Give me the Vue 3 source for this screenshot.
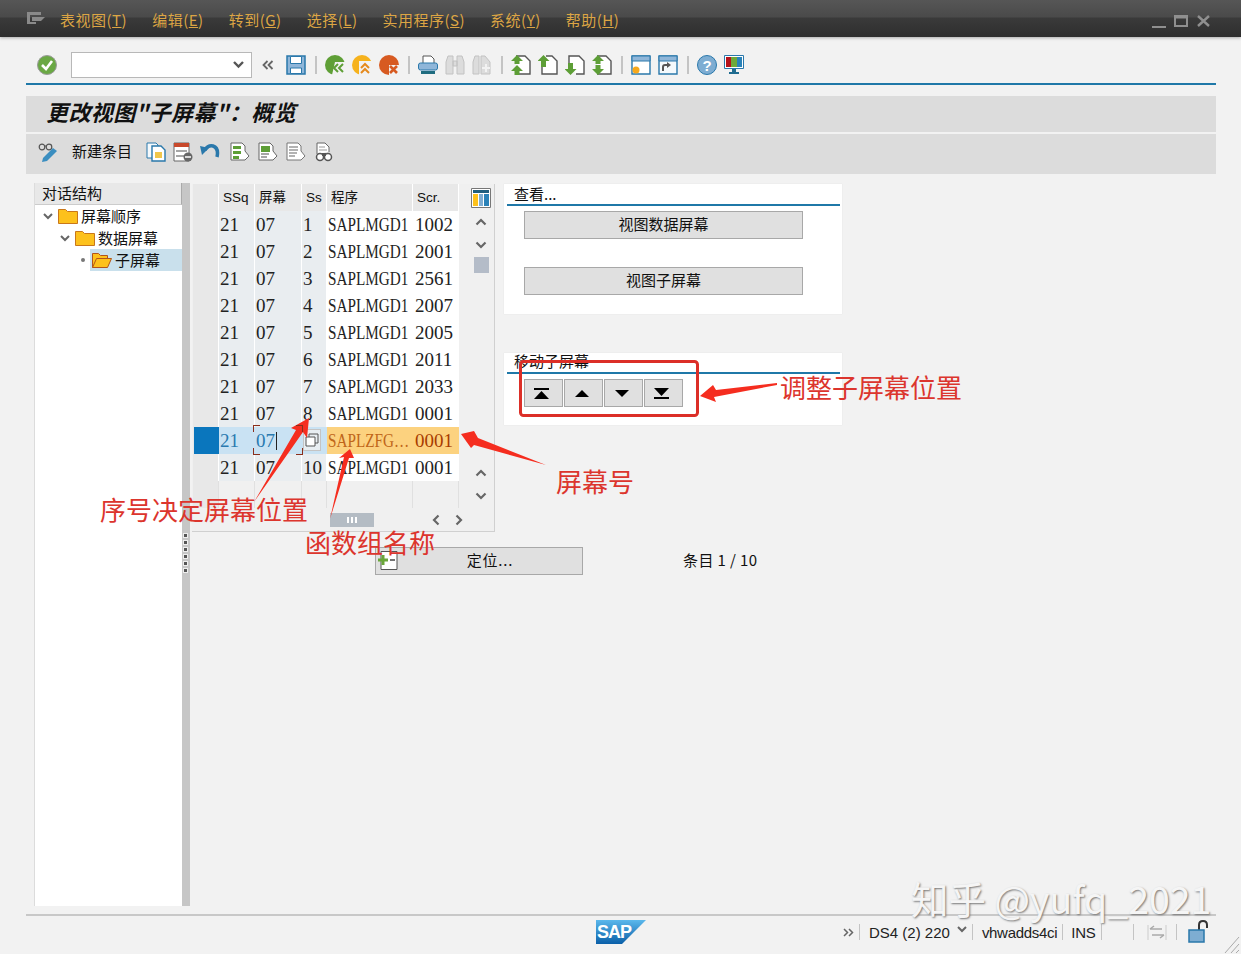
<script setup>
const menus = [
  { label: '表视图', key: 'T' },
  { label: '编辑', key: 'E' },
  { label: '转到', key: 'G' },
  { label: '选择', key: 'L' },
  { label: '实用程序', key: 'S' },
  { label: '系统', key: 'Y' },
  { label: '帮助', key: 'H' }
];

const columns = ['SSq', '屏幕', 'Ss', '程序', 'Scr.'];

const rows = [
  { ss: '1', scr: '1002' },
  { ss: '2', scr: '2001' },
  { ss: '3', scr: '2561' },
  { ss: '4', scr: '2007' },
  { ss: '5', scr: '2005' },
  { ss: '6', scr: '2011' },
  { ss: '7', scr: '2033' },
  { ss: '8', scr: '0001' },
  { ss: '', scr: '0001', prog: 'SAPLZFG…', active: true },
  { ss: '10', scr: '0001' }
];
</script>

<template>
  <div class="page">
    <header class="titlebar">
      <svg class="sys-icon" width="19" height="14" viewBox="0 0 19 14">
        <path d="M1 1h14v3H4v7h6v2H1z" fill="#8a8a8a" />
        <path d="M6 6h13l-4 4H6z" fill="#8a8a8a" />
      </svg>
      <nav class="menu">
        <span v-for="m in menus" :key="m.key">{{ m.label }}(<u>{{ m.key }}</u>)</span>
      </nav>
      <div class="win-btns">
        <svg width="62" height="16" viewBox="0 0 62 16">
          <path d="M2 14h14" stroke="#8f8f8f" stroke-width="2" />
          <path d="M25 3h12v10H25z" fill="none" stroke="#8f8f8f" stroke-width="2" />
          <path d="M25 4h12" stroke="#8f8f8f" stroke-width="3" />
          <path d="M48 3l11 10M59 3L48 13" stroke="#8f8f8f" stroke-width="2.4" />
        </svg>
      </div>
    </header>

    <div class="toolbar">
      <svg class="ic" viewBox="0 0 20 20">
        <circle cx="10" cy="10" r="9.5" fill="#6aa844" stroke="#9a9a9a" />
        <path d="M5 10l4 4 6-8" fill="none" stroke="#fff" stroke-width="2.6" />
      </svg>
      <div class="combo">
        <svg width="11" height="8" viewBox="0 0 11 8"><path d="M1 1l4.5 4.5L10 1" fill="none" stroke="#555" stroke-width="2.4" /></svg>
      </div>
      <svg class="chev-left" width="12" height="10" viewBox="0 0 12 10">
        <path d="M5.500 1L1.500 5l4 4M10.500 1l-4 4 4 4" fill="none" stroke="#666" stroke-width="1.800" />
      </svg>
      <svg class="ic" viewBox="0 0 20 20">
        <path d="M1 1h18v18H1z" fill="#8fb6d9" stroke="#2a78ab" stroke-width="1.500" />
        <path d="M4.500 1.500h11v7h-11zM4.500 13h11v5.500h-11z" fill="#fff" stroke="#2a78ab" />
      </svg>
      <i class="sep"></i>
      <svg class="ic" viewBox="0 0 20 20">
        <circle cx="10" cy="10" r="10" fill="#5f9f36" />
        <path d="M10 7h10v13H7z" fill="#f2f2f2" />
        <path d="M13 9l-4 4 4 4M18 9l-4 4 4 4" fill="none" stroke="#5f9f36" stroke-width="2" />
      </svg>
      <svg class="ic" viewBox="0 0 20 20">
        <circle cx="10" cy="10" r="10" fill="#f6b21d" />
        <path d="M7 6h13v14H7z" fill="#f2f2f2" />
        <path d="M9 13l4-4 4 4M9 18l4-4 4 4" fill="none" stroke="#e58a1e" stroke-width="2" />
      </svg>
      <svg class="ic" viewBox="0 0 20 20">
        <circle cx="10" cy="10" r="10" fill="#d75a21" />
        <path d="M10 10h10v10H10z" fill="#f2f2f2" />
        <path d="M11 11l7 7M18 11l-7 7" stroke="#d75a21" stroke-width="2.600" />
      </svg>
      <i class="sep"></i>
      <svg class="ic" viewBox="0 0 20 20">
        <path d="M5 8V1h8l3 3v4" fill="#fff" stroke="#555" />
        <rect x="0.500" y="8" width="19" height="7" rx="2" fill="#8fb6d9" stroke="#2a78ab" />
        <path d="M3 16h14v3H3z" fill="#1f6c80" />
      </svg>
      <svg class="ic" viewBox="0 0 20 20">
        <path d="M3 1h5v18H1V7zM17 1h-5v18h7V7zM8 6h4v5H8z" fill="#dcdcdc" stroke="#c2c2c2" />
      </svg>
      <svg class="ic" viewBox="0 0 20 20">
        <path d="M3 1h4v18H1V7zM13 1H9v18h9V7z" fill="#dcdcdc" stroke="#c2c2c2" />
        <path d="M14 9v8M10 13h8" stroke="#f2f2f2" stroke-width="2" />
      </svg>
      <i class="sep"></i>
      <svg class="ic" viewBox="0 0 20 20">
        <path d="M5 1h9l5 5v13H5" fill="#fff" stroke="#555" stroke-width="1.400" />
        <path d="M6 0l6 6H8.500v3h-5V6H0zM6 10l6 6H8.500v4h-5v-4H0z" fill="#5d9e36" />
      </svg>
      <svg class="ic" viewBox="0 0 20 20">
        <path d="M8 1h6l5 5v13H4v-7" fill="#fff" stroke="#555" stroke-width="1.400" />
        <path d="M5.500 0l6 6H8v6H3V6H-.5z" fill="#5d9e36" />
      </svg>
      <svg class="ic" viewBox="0 0 20 20">
        <path d="M4 8V1h10l5 5v13h-8" fill="#fff" stroke="#555" stroke-width="1.400" />
        <path d="M5.500 20l6-6H8V8H3v6H-.5z" fill="#5d9e36" />
      </svg>
      <svg class="ic" viewBox="0 0 20 20">
        <path d="M5 1h9l5 5v13H5" fill="#fff" stroke="#555" stroke-width="1.400" />
        <path d="M6 0l6 6H8.500v3h-5V6H0zM6 20l6-6H8.500v-4h-5v4H0z" fill="#5d9e36" />
      </svg>
      <i class="sep"></i>
      <svg class="ic" viewBox="0 0 20 20">
        <path d="M1 1h18v18H1z" fill="#fff" stroke="#2a78ab" stroke-width="1.400" />
        <path d="M1 1h18v5H1z" fill="#8fb6d9" stroke="#2a78ab" />
        <circle cx="5" cy="15" r="3.500" fill="#f7a81b" />
      </svg>
      <svg class="ic" viewBox="0 0 20 20">
        <path d="M1 1h18v18H1z" fill="#f4f9fc" stroke="#2a78ab" stroke-width="1.400" />
        <path d="M1 1h18v5H1z" fill="#8fb6d9" stroke="#2a78ab" />
        <path d="M5 16v-4q0-2 2-2h4" fill="none" stroke="#555" stroke-width="2" />
        <path d="M9 7l4 3-4 3z" fill="#555" />
      </svg>
      <i class="sep"></i>
      <svg class="ic" viewBox="0 0 20 20">
        <circle cx="10" cy="10" r="9.500" fill="#7eadd2" stroke="#2a78ab" />
        <text x="10" y="15.500" text-anchor="middle" class="help-q">?</text>
      </svg>
      <svg class="ic" viewBox="0 0 20 20">
        <path d="M0.500 0.500h19v13h-19z" fill="#fff" stroke="#2a78ab" />
        <path d="M2 2h5v10H2z" fill="#b5121b" />
        <path d="M7 2h6v10H7z" fill="#6fa838" />
        <path d="M13 2h5v10h-5z" fill="#2a82b8" />
        <path d="M8 14h4v3h3v2H5v-2h3z" fill="#1f6c90" />
      </svg>
    </div>

    <h1 class="screen-title">更改视图"子屏幕"：概览</h1>

    <div class="app-toolbar">
      <svg class="ic" viewBox="0 0 20 20">
        <circle cx="4" cy="5" r="2.800" fill="none" stroke="#555" stroke-width="1.200" />
        <circle cx="11" cy="5" r="2.800" fill="none" stroke="#555" stroke-width="1.200" />
        <path d="M7 4h1" stroke="#555" />
        <path d="M5 16l10-10 4 3-10 10-5 1z" fill="#3b8ec0" />
      </svg>
      <span class="new-entry">新建条目</span>
      <svg class="ic" viewBox="0 0 20 20">
        <path d="M1 1h9l2 2v13H1z" fill="#f5f9fc" stroke="#2a78ab" />
        <path d="M6 4h9l4 4v11H6z" fill="#fff" stroke="#2a78ab" stroke-width="1.400" />
        <path d="M9 10h7v6H9z" fill="#f1c64a" />
      </svg>
      <svg class="ic" viewBox="0 0 20 20">
        <path d="M1 1h15v18H1z" fill="#fff" stroke="#666" />
        <path d="M1 1h15v4H1z" fill="#c8492c" />
        <path d="M3 9h11M3 14h8" stroke="#888" stroke-width="1.500" />
        <circle cx="15" cy="15" r="4.500" fill="#666" />
        <path d="M12 15h6" stroke="#fff" stroke-width="1.500" />
      </svg>
      <svg class="ic undo" viewBox="0 0 20 20">
        <path d="M5 8Q8 3 13 4q6 2 4 11" fill="none" stroke="#2a78ab" stroke-width="3.500" />
        <path d="M0 4l9 2-7 7z" fill="#2a78ab" />
      </svg>
      <svg class="ic" viewBox="0 0 20 20">
        <path d="M1 1h11l3 3v5l4 5-4 4H1z" fill="#fff" stroke="#666" />
        <path d="M3 4h8v3H3zM3 9h8v3H3zM3 14h6v3H3z" fill="#5d9e36" />
      </svg>
      <svg class="ic wide" viewBox="0 0 20 20">
        <path d="M1 1h11l3 3v5l4 5-4 4H1z" fill="#fff" stroke="#666" />
        <path d="M3 4h9v6H3z" fill="#5d9e36" />
        <path d="M3 12h8M3 15h6" stroke="#888" stroke-width="1.500" />
      </svg>
      <svg class="ic wide" viewBox="0 0 20 20">
        <path d="M1 1h11l3 3v5l4 5-4 4H1z" fill="#fff" stroke="#777" />
        <path d="M3 5h9M3 8h9M3 11h8M3 14h6" stroke="#999" stroke-width="1.500" />
      </svg>
      <svg class="ic wide" viewBox="0 0 20 20">
        <path d="M3 12V1h8l4 4v5" fill="#fff" stroke="#666" />
        <path d="M5 5h6M5 8h8" stroke="#999" />
        <circle cx="6" cy="15" r="3.500" fill="#fff" stroke="#555" stroke-width="1.500" />
        <circle cx="14" cy="15" r="3.500" fill="#fff" stroke="#555" stroke-width="1.500" />
        <path d="M8 11h4v3H8z" fill="#555" />
      </svg>
    </div>

    <div class="content">
      <aside class="tree">
        <div class="tree-head">对话结构</div>
        <div class="tree-row lvl1">
          <svg class="tw" width="10" height="7" viewBox="0 0 10 7"><path d="M1 1l4 4 4-4" fill="none" stroke="#666" stroke-width="2" /></svg>
          <svg class="folder" width="20" height="15" viewBox="0 0 20 15"><path d="M.500 14.500V.500h7l2 2h10v12z" fill="#fdc11c" stroke="#c9771a" /></svg>
          <span>屏幕顺序</span>
        </div>
        <div class="tree-row lvl2">
          <svg class="tw" width="10" height="7" viewBox="0 0 10 7"><path d="M1 1l4 4 4-4" fill="none" stroke="#666" stroke-width="2" /></svg>
          <svg class="folder" width="20" height="15" viewBox="0 0 20 15"><path d="M.500 14.500V.500h7l2 2h10v12z" fill="#fdc11c" stroke="#c9771a" /></svg>
          <span>数据屏幕</span>
        </div>
        <div class="tree-row lvl3">
          <i class="bullet"></i>
          <div class="selected">
            <svg class="folder" width="20" height="15" viewBox="0 0 20 15">
              <path d="M.500 14.500V.500h6l2 2h7v3" fill="#fdc11c" stroke="#b2551a" />
              <path d="M.500 14.500l4-9h15l-4 9z" fill="#fdc11c" stroke="#b2551a" />
            </svg>
            <span>子屏幕</span>
          </div>
        </div>
      </aside>

      <div class="splitter">
        <div class="grip"><i v-for="n in 6" :key="n"></i></div>
      </div>

      <main class="main">
        <div class="top-row">
          <section class="table-box">
            <div class="table-left">
              <div class="grid head">
                <div class="cell sel"></div>
                <div v-for="c in columns" :key="c" class="cell hcell">{{ c }}</div>
              </div>
              <div v-for="(r, i) in rows" :key="i" class="grid row" :class="{ active: r.active }">
                <div class="cell sel"></div>
                <div class="cell key">21</div>
                <div class="cell key">
                  <template v-if="r.active">
                    <span class="focus">07<i class="caret"></i></span>
                  </template>
                  <template v-else>07</template>
                </div>
                <div class="cell key">
                  {{ r.ss }}
                  <span v-if="r.active" class="f4">
                    <svg width="14" height="14" viewBox="0 0 14 14">
                      <path d="M4 1h9v9H4z" fill="none" stroke="#555" />
                      <path d="M1 4h9v9H1z" fill="#fff" stroke="#555" />
                    </svg>
                  </span>
                </div>
                <div class="cell prog"><span>{{ r.prog || 'SAPLMGD1' }}</span></div>
                <div class="cell scr">{{ r.scr }}</div>
              </div>
              <div class="grid row empty">
                <div class="cell sel"></div>
                <div class="cell"></div>
                <div class="cell"></div>
                <div class="cell"></div>
                <div class="cell"></div>
                <div class="cell"></div>
              </div>
              <div class="hscroll">
                <div class="hthumb">
                  <svg width="10" height="6" viewBox="0 0 10 6"><path d="M1 0v6M5 0v6M9 0v6" stroke="#fff" stroke-width="2" /></svg>
                </div>
                <svg class="hl" width="8" height="12" viewBox="0 0 8 12"><path d="M6.500 1.500L2 6l4.500 4.500" fill="none" stroke="#666" stroke-width="2.200" /></svg>
                <svg class="hr" width="8" height="12" viewBox="0 0 8 12"><path d="M1.500 1.500L6 6l-4.500 4.500" fill="none" stroke="#666" stroke-width="2.200" /></svg>
              </div>
            </div>
            <div class="table-side">
              <div class="cfg">
                <svg width="20" height="20" viewBox="0 0 20 20">
                  <path d="M.500 .500h19v19H.500z" fill="#fff" stroke="#777" />
                  <path d="M2 2h16v3H2z" fill="#1f5f80" />
                  <path d="M2 6h5v12H2z" fill="#fdc11c" />
                  <path d="M8 6h4v12H8z" fill="#7eadd2" />
                  <path d="M13 6h5v12h-5z" fill="#2a82b8" />
                </svg>
              </div>
              <svg class="vchev up1" width="12" height="8" viewBox="0 0 12 8"><path d="M1.500 6.500L6 2l4.500 4.500" fill="none" stroke="#666" stroke-width="2.200" /></svg>
              <svg class="vchev dn1" width="12" height="8" viewBox="0 0 12 8"><path d="M1.500 1.500L6 6l4.500-4.500" fill="none" stroke="#666" stroke-width="2.200" /></svg>
              <div class="vthumb"></div>
              <svg class="vchev up2" width="12" height="8" viewBox="0 0 12 8"><path d="M1.500 6.500L6 2l4.500 4.500" fill="none" stroke="#666" stroke-width="2.200" /></svg>
              <svg class="vchev dn2" width="12" height="8" viewBox="0 0 12 8"><path d="M1.500 1.500L6 6l4.500-4.500" fill="none" stroke="#666" stroke-width="2.200" /></svg>
            </div>
          </section>

          <div class="panels">
            <section class="panel view-panel">
              <div class="panel-title">查看...</div>
              <button class="btn big">视图数据屏幕</button>
              <button class="btn big second">视图子屏幕</button>
            </section>
            <section class="panel move-panel">
              <div class="panel-title">移动子屏幕</div>
              <div class="move-btns">
                <button class="btn small">
                  <svg width="15" height="11" viewBox="0 0 15 11"><path d="M0 1h15" stroke="#000" stroke-width="2" /><path d="M7.500 3l7.500 8H0z" /></svg>
                </button>
                <button class="btn small">
                  <svg width="14" height="7" viewBox="0 0 14 7"><path d="M7 0l7 7H0z" /></svg>
                </button>
                <button class="btn small">
                  <svg width="14" height="7" viewBox="0 0 14 7"><path d="M0 0h14L7 7z" /></svg>
                </button>
                <button class="btn small">
                  <svg width="15" height="11" viewBox="0 0 15 11"><path d="M0 0h15L7.500 8z" /><path d="M0 10h15" stroke="#000" stroke-width="2" /></svg>
                </button>
              </div>
            </section>
          </div>
        </div>

        <div class="locate-row">
          <button class="btn locate">
            <svg class="locate-ic" width="21" height="19" viewBox="0 0 21 19">
              <path d="M4 .500h16v18H4z" fill="#fff" stroke="#555" />
              <path d="M4.500 4h3v3.500H11v3H7.500V14h-3v-3.500H1v-3h3.500z" fill="#6aa63a" />
              <path d="M13 9h5" stroke="#444" stroke-width="1.500" />
            </svg>
            定位...
          </button>
          <span class="entry-count">条目 1 / 10</span>
        </div>
      </main>
    </div>

    <footer class="statusbar">
      <svg class="sap" width="50" height="24" viewBox="0 0 50 24">
        <defs>
          <linearGradient id="sapg" x1="0" y1="0" x2="0" y2="1">
            <stop offset="0" stop-color="#5bb8ec" />
            <stop offset="1" stop-color="#0a5fa8" />
          </linearGradient>
        </defs>
        <path d="M0 0h50L26 24H0z" fill="url(#sapg)" />
        <text x="1" y="18" class="sap-text">SAP</text>
      </svg>
      <div class="status-items">
        <svg width="11" height="9" viewBox="0 0 11 9"><path d="M1 1l3.500 3.500L1 8M6 1l3.500 3.500L6 8" fill="none" stroke="#666" stroke-width="1.500" /></svg>
        <i class="ssep s1"></i>
        <span class="sys">DS4 (2) 220</span>
        <svg class="sys-arrow" width="10" height="7" viewBox="0 0 10 7"><path d="M1 1l4 4 4-4" fill="none" stroke="#666" stroke-width="2" /></svg>
        <i class="ssep s2"></i>
        <span class="host">vhwadds4ci</span>
        <i class="ssep s3"></i>
        <span class="ins">INS</span>
        <i class="ssep s4"></i>
        <i class="ssep s5"></i>
        <svg class="trans" width="20" height="17" viewBox="0 0 20 17">
          <path d="M1 1v15M19 1v15" stroke="#ccc" />
          <path d="M3 5h12M3 5l4-3M17 11H5M17 11l-4 3" fill="none" stroke="#aaa" stroke-width="1.500" />
        </svg>
        <i class="ssep s6"></i>
        <svg class="lock" width="21" height="23" viewBox="0 0 21 23">
          <path d="M11 10V5q0-4 4-4t4 4v3" fill="none" stroke="#333" stroke-width="2" />
          <path d="M1 10h15v12H1z" fill="#7eadd2" stroke="#2a78ab" stroke-width="1.500" />
        </svg>
      </div>
      <svg class="resize" width="16" height="18" viewBox="0 0 16 18">
        <path d="M1 17L15 1M7 17l8-9M12 17l3-3" stroke="#aaa" />
      </svg>
    </footer>

    <!-- 标注层 -->
    <svg class="marks" width="1241" height="954" viewBox="0 0 1241 954">
      <rect x="520.500" y="361.500" width="177" height="54" rx="3" fill="none" stroke="#dc2f28" stroke-width="3" />
      <path d="M254 502L296 430L291 428L309 418L307 438L303 432z" fill="#f52d1f" />
      <path d="M330 519L344 457L339 458L350 449L354 458L349 458z" fill="#f52d1f" />
      <path d="M546 465L478 438L474 431L461 434L471 448L474 445z" fill="#f52d1f" />
      <path d="M777 383L716 390L713 385L700 396L716 402L714 397L777 385z" fill="#f52d1f" />
    </svg>
    <span class="mark-text m1">序号决定屏幕位置</span>
    <span class="mark-text m2">函数组名称</span>
    <span class="mark-text m3">屏幕号</span>
    <span class="mark-text m4">调整子屏幕位置</span>
    <span class="watermark">知乎 @yufq_2021</span>
  </div>
</template>

<style>
html, body { margin: 0; background: #f2f2f2; }
</style>

<style scoped>
.page {
  position: relative;
  width: 1241px;
  height: 954px;
  overflow: hidden;
  background: #f2f2f2;
  display: flex;
  flex-direction: column;
  font-family: "Noto Sans CJK SC", "Liberation Sans", sans-serif;
  color: #111;
}

.titlebar {
  height: 37px;
  flex: none;
  display: flex;
  align-items: center;
  padding: 2px 29px 0 26px;
  box-sizing: border-box;
  background: linear-gradient(#565656 0, #4a4a4a 17px, #3a3a3a 18px, #2e2e2e 37px);
  box-shadow: 0 1px 3px #aaa;
}
.sys-icon { margin-top: -4px; }
.menu { display: flex; gap: 25px; margin-left: 15px; font-size: 15px; letter-spacing: .5px; color: #dca544; }
.win-btns { margin-left: auto; margin-top: -4px; height: 16px; }

.ic { width: 20px; height: 20px; flex: none; }
.toolbar {
  height: 47px;
  flex: none;
  margin: 1px 25px 0 26px;
  padding: 8px 0 0 11px;
  box-sizing: border-box;
  border-bottom: 2px solid #1f78a8;
  display: flex;
  align-items: center;
  gap: 7px;
}
.combo {
  width: 181px;
  height: 26px;
  margin-left: 7px;
  box-sizing: border-box;
  background: #fff;
  border: 1px solid #b8b8b8;
  display: flex;
  align-items: center;
  justify-content: flex-end;
  padding-right: 7px;
}
.chev-left { margin: 0 5px 0 3px; }
.sep { width: 2px; height: 18px; background: #c4c4c4; margin: 0 1.500px; }
.help-q { font: bold 15px "Liberation Sans", sans-serif; fill: #fff; }

.screen-title {
  height: 36px;
  flex: none;
  margin: 11px 25px 0 26px;
  padding-left: 20px;
  box-sizing: border-box;
  background: #dcdcdc;
  font-size: 22px;
  line-height: 31px;
  letter-spacing: .4px;
  font-weight: 700;
  font-style: italic;
  color: #111;
}

.app-toolbar {
  height: 40px;
  flex: none;
  margin: 2px 25px 0 26px;
  padding: 0 0 4px 12px;
  box-sizing: border-box;
  background: #dcdcdc;
  display: flex;
  align-items: center;
  gap: 7px;
}
.new-entry { font-size: 15px; margin: 0 7px; line-height: 18px; padding-bottom: 2px; }
.undo { margin-right: 3px; }
.wide { margin-left: 1px; }

.content {
  flex: none;
  height: 723px;
  margin: 9px 0 0 34px;
  display: flex;
}

.tree {
  width: 148px;
  flex: none;
  box-sizing: border-box;
  background: #fff;
  border-left: 1px solid #dcdcdc;
  font-size: 15px;
}
.tree-head {
  height: 22px;
  line-height: 19px;
  padding-left: 7px;
  background: #e8e8e8;
  border-bottom: 1px solid #ccc;
  border-right: 1px solid #aaa;
  box-sizing: border-box;
}
.tree-row { height: 22px; display: flex; align-items: center; }
.tree-row span { line-height: 20px; }
.lvl1 { padding-left: 8px; }
.lvl2 { padding-left: 25px; }
.lvl3 { padding-left: 46px; }
.tw { margin-right: 5px; }
.folder { margin-right: 3px; flex: none; }
.bullet { width: 4px; height: 4px; border-radius: 50%; background: #777; margin-right: 5px; }
.selected {
  flex: 1;
  height: 22px;
  display: flex;
  align-items: center;
  padding-left: 2px;
  background: #c9e0ec;
}

.splitter {
  width: 8px;
  flex: none;
  background: #c6c6c6;
  display: flex;
  align-items: flex-start;
}
.grip { margin: 350px 0 0 1px; display: flex; flex-direction: column; gap: 2px; }
.grip i { width: 5px; height: 5px; background: #555; border: 1px solid #eee; box-sizing: border-box; }

.main { flex: 1; margin: 1px 0 0 2px; }
.top-row { display: flex; align-items: flex-start; }

.table-box {
  width: 303px;
  height: 348px;
  flex: none;
  box-sizing: border-box;
  display: flex;
  padding-left: 1px;
  background: #f0f0f0;
  border-right: 1px solid #d0d0d0;
  border-bottom: 1px solid #d0d0d0;
}
.table-left { width: 266px; flex: none; }
.grid { display: grid; grid-template-columns: 26px 36px 47px 25px 86px 46px; height: 27px; }
.cell { box-sizing: border-box; border-right: 1px solid #fff; border-bottom: 1px solid #d9dfe3; position: relative; }
.head .cell { background: #e8e8e8; border-bottom-color: #e8e8e8; }
.hcell { font-size: 13.500px; line-height: 28px; padding-left: 4px; font-family: "Liberation Sans", "Noto Sans CJK SC", sans-serif; }
.sel { background: #e8e8e8; }
.row .cell {
  font-family: "Liberation Serif", serif;
  font-size: 19px;
  line-height: 27px;
  padding-left: 1px;
  color: #222;
}
.key { background: #e9edf0; }
.prog, .scr { background: #fff; }
.prog span { display: inline-block; transform: scaleX(.8); transform-origin: left center; white-space: nowrap; }
.row .scr { padding-left: 2px; }

.row.active .sel { background: #0a76bd; border-color: #0a76bd; border-left: 1px solid #e8e8e8; }
.row.active .key { background: #c9e2f3; color: #2a7ab0; border-color: #c9e2f3; }
.row.active .prog, .row.active .scr { background: #fcd27f; border-color: #fcd27f; }
.row.active .prog { color: #c0661a; }
.row.active .scr { color: #a83c00; }
.row.empty .cell { background: #f0f0f0; border-right: 1px solid #e0e0e0; border-bottom: 0; }
.row.empty .sel { background: #e8e8e8; }

.focus { position: relative; z-index: 2; display: block; }
.focus::before {
  content: "";
  position: absolute;
  left: -3px;
  top: -2px;
  width: 50px;
  height: 30px;
  background:
    linear-gradient(#8a2f1c, #8a2f1c) left top / 7px 1px no-repeat,
    linear-gradient(#8a2f1c, #8a2f1c) left top / 1px 7px no-repeat,
    linear-gradient(#8a2f1c, #8a2f1c) right top / 7px 1px no-repeat,
    linear-gradient(#8a2f1c, #8a2f1c) right top / 1px 7px no-repeat,
    linear-gradient(#8a2f1c, #8a2f1c) left bottom / 7px 1px no-repeat,
    linear-gradient(#8a2f1c, #8a2f1c) left bottom / 1px 7px no-repeat,
    linear-gradient(#8a2f1c, #8a2f1c) right bottom / 7px 1px no-repeat,
    linear-gradient(#8a2f1c, #8a2f1c) right bottom / 1px 7px no-repeat;
}
.caret { position: absolute; left: 20px; top: 5px; width: 1px; height: 18px; background: #222; }
.f4 {
  position: absolute;
  left: 1px;
  top: 2px;
  width: 18px;
  height: 22px;
  box-sizing: border-box;
  background: #e8eef2;
  border: 1px solid #c4c4c4;
  display: flex;
  align-items: center;
  justify-content: center;
}

.hscroll { height: 23px; display: flex; align-items: center; padding-left: 137px; box-sizing: border-box; }
.hthumb {
  width: 44px;
  height: 14px;
  background: #b4bcc4;
  display: flex;
  align-items: center;
  justify-content: center;
}
.hl { margin-left: 58px; }
.hr { margin-left: 15px; margin-right: -8px; }

.table-side { position: relative; flex: 1; display: flex; flex-direction: column; align-items: center; padding-left: 9px; }
.cfg { width: 20px; height: 20px; margin-top: 4px; }
.vchev { flex: none; }
.up1 { margin-top: 10px; }
.dn1 { margin-top: 15px; }
.vthumb { width: 15px; height: 16px; margin-top: 8px; background: #b4bcc8; }
.up2 { margin-top: 196px; }
.dn2 { margin-top: 15px; }

.panels { margin-left: 9px; width: 338px; flex: none; }
.panel { background: #fff; box-sizing: border-box; padding: 0 2px 0 3px; box-shadow: 0 0 1px #ddd; }
.view-panel { height: 130px; }
.move-panel { height: 72px; margin-top: 39px; }
.panel-title { height: 22px; line-height: 19px; font-size: 15px; padding-left: 7px; box-sizing: border-box; border-bottom: 2px solid #1f78a8; }
.move-panel .panel-title { height: 21px; line-height: 16px; }

.btn {
  display: block;
  box-sizing: border-box;
  background: #e0e0e0;
  border: 1px solid #a8a8a8;
  padding: 0 0 3px;
  font-family: inherit;
  font-size: 15px;
  color: #111;
}
.big { width: 279px; height: 28px; margin: 5px 0 0 17px; }
.big.second { margin-top: 28px; }
.move-btns { display: flex; gap: 1px; margin: 5px 0 0 17px; }
.small { width: 39px; height: 28px; padding: 0 4px 0 0; display: flex; align-items: center; justify-content: center; }
.small svg { display: block; }

.locate-row { display: flex; align-items: center; margin-top: 15px; margin-left: 183px; }
.locate { position: relative; width: 208px; height: 28px; font-size: 15px; padding-left: 22px; letter-spacing: .8px; }
.locate-ic { position: absolute; left: 1px; top: 3px; }
.entry-count { margin: 0 0 4px 100px; font-size: 15px; letter-spacing: .4px; }

.statusbar {
  position: relative;
  flex: none;
  height: 40px;
  margin: 8px 25px 0 26px;
  border-top: 2px solid #c8c8c8;
  box-sizing: border-box;
}
.sap { position: absolute; left: 570px; top: 4px; }
.sap-text { font: 700 18px "Liberation Sans", sans-serif; fill: #fff; letter-spacing: -1px; }
.status-items {
  position: absolute;
  left: 817px;
  top: 4px;
  height: 24px;
  display: flex;
  align-items: center;
  font-family: "Liberation Sans", sans-serif;
  font-size: 15px;
  color: #222;
  white-space: nowrap;
}
.ssep { width: 1px; height: 16px; background: #c4c4c4; }
.s1 { margin: 0 9px 0 5px; }
.sys-arrow { margin: 0 0 5px 7px; }
.s2 { margin: 0 9px 0 5px; }
.host { letter-spacing: -.3px; }
.s3 { margin: 0 8px 0 5px; }
.ins { letter-spacing: -.3px; }
.s4 { margin-left: 6px; }
.s5 { margin-left: 31px; }
.trans { margin-left: 13px; }
.s6 { margin-left: 9px; }
.lock { margin-left: 11px; margin-top: -2px; }
.resize { position: absolute; right: -24px; bottom: 0; }

.marks { position: absolute; left: 0; top: 0; pointer-events: none; }
.mark-text { position: absolute; font-size: 26px; line-height: 30px; color: #dc352d; white-space: nowrap; }
.m1 { left: 100px; top: 494px; }
.m2 { left: 305px; top: 527px; }
.m3 { left: 556px; top: 466px; }
.m4 { left: 780px; top: 372px; }
.watermark {
  position: absolute;
  left: 911px;
  top: 873px;
  font-size: 37.500px;
  line-height: 50px;
  font-weight: 400;
  color: #f5f5f5;
  white-space: nowrap;
  text-shadow: 1px 1px 2px #777;
}
</style>
